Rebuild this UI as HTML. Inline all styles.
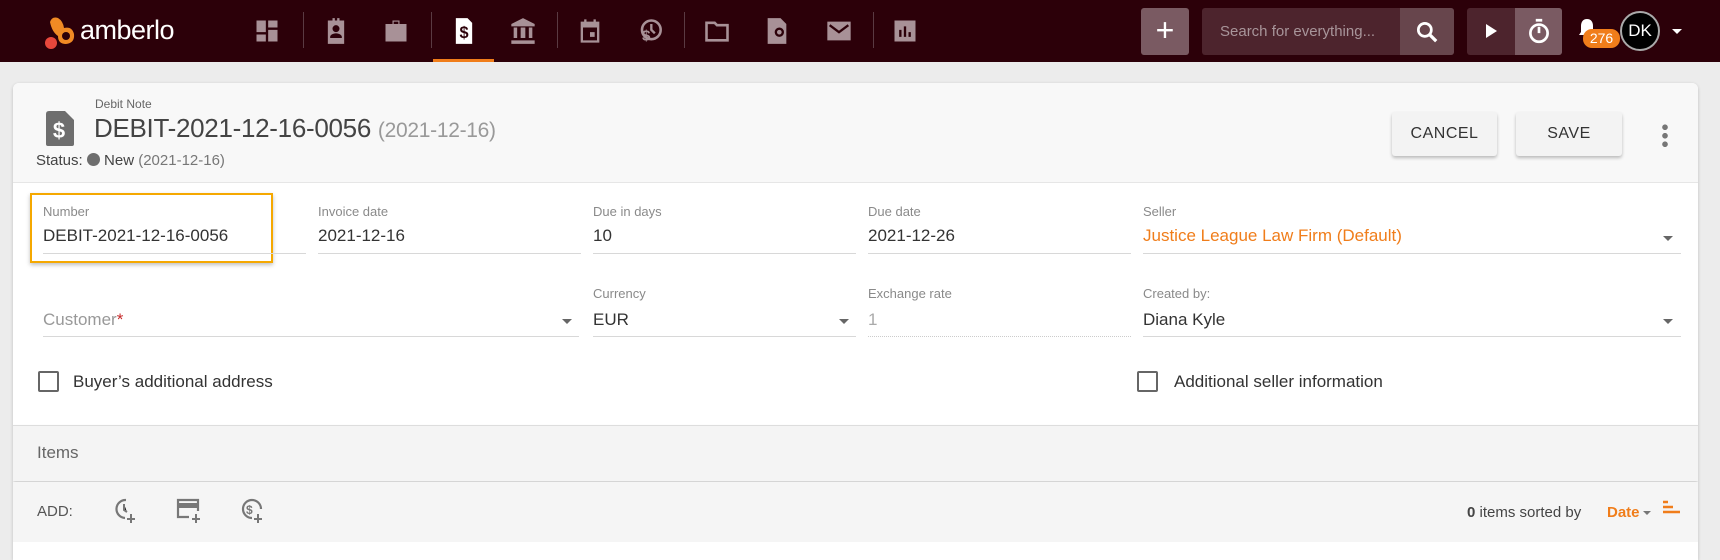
<!DOCTYPE html>
<html><head><meta charset="utf-8"><style>
*{box-sizing:border-box;margin:0;padding:0}
body{width:1720px;height:560px;overflow:hidden;background:#ececec;font-family:"Liberation Sans",sans-serif;color:#333;position:relative}
.nav{position:absolute;left:0;top:0;width:1720px;height:62px;background:#2c0009}
.ab{position:absolute}
.sep{position:absolute;top:12px;width:1px;height:36px;background:#5a3a42}
.ic{position:absolute;top:17px;width:28px;height:28px;margin-left:-2px}
.card{position:absolute;left:13px;top:83px;width:1685px;height:477px;background:#fff;border-radius:6px 6px 0 0;box-shadow:0 1px 3px rgba(0,0,0,.2);overflow:hidden}
.hdr{position:absolute;left:0;top:0;width:100%;height:100px;background:#f8f8f8;border-bottom:1px solid #e6e6e6}
.lbl{position:absolute;font-size:13px;color:#8a8a8a}
.val{position:absolute;font-size:17px;color:#333}
.ul{position:absolute;height:1px;background:#d8d8d8}
.car{position:absolute;width:0;height:0;border-left:5px solid transparent;border-right:5px solid transparent;border-top:5px solid #666}
.btn{position:absolute;top:29px;height:44px;background:#f3f3f3;border-radius:3px;box-shadow:0 2px 3px rgba(0,0,0,.25);font-size:16px;color:#333;text-align:center;line-height:44px;letter-spacing:.5px}
.cb{position:absolute;width:21px;height:21px;border:2px solid #666;border-radius:2px}
</style></head><body>
<div class="nav">
  <svg class="ab" style="left:44px;top:16px" width="44" height="34" viewBox="0 0 44 34"><circle cx="7" cy="27" r="6" fill="#e8473c"/><path d="M6 6 Q8 0 14 2 Q19 5 20 12 Q28 10 30 18 Q31 27 22 28 Q14 28 14 20 Q8 16 6 6Z" fill="#f08a24"/><circle cx="22" cy="20" r="4" fill="#2c0009"/></svg>
  <div class="ab" style="left:80px;top:15px;font-size:27px;color:#fff;letter-spacing:-.5px">amberlo</div>
  <svg class="ic" style="left:255px" viewBox="0 0 24 24"><path d="M3 3h8v10H3zM13 3h8v6h-8zM13 11h8v10h-8zM3 15h8v6H3z" fill="#a89197"/></svg>
  <div class="sep" style="left:303px"></div>
  <svg class="ic" style="left:324px" viewBox="0 0 24 24"><path d="M5 3h4V1h2v2h2V1h2v2h4v20H5zM12 7a3 3 0 100 6 3 3 0 000-6zM7 18h10v-1c0-2-3-3-5-3s-5 1-5 3z" fill="#a89197" fill-rule="evenodd"/></svg>
  <svg class="ic" style="left:384px" viewBox="0 0 24 24"><path d="M9 3h6v3h6v15H3V6h6zM10 4v2h4V4z" fill="#a89197" fill-rule="evenodd"/></svg>
  <div class="sep" style="left:431px"></div>
  <svg class="ic" style="left:452px" viewBox="0 0 24 24"><path d="M5 1h10l4 4v18H5z" fill="#fff"/><text x="12" y="18" font-size="14" font-weight="bold" text-anchor="middle" fill="#2c0009" font-family="Liberation Sans">$</text></svg>
  <div class="ab" style="left:433px;top:59px;width:61px;height:3px;background:#f07d1a"></div>
  <svg class="ic" style="left:511px" viewBox="0 0 24 24"><path d="M12 1l10 5v2H2V6zM4 9h3v9H4zM10 9h4v9h-4zM17 9h3v9h-3zM2 20h20v3H2z" fill="#a89197"/></svg>
  <div class="sep" style="left:557px"></div>
  <svg class="ic" style="left:578px" viewBox="0 0 24 24"><path d="M4 4h3V2h2v2h6V2h2v2h3v18H4zM6 9v11h12V9zM12 13h4v4h-4z" fill="#a89197" fill-rule="evenodd"/></svg>
  <svg class="ic" style="left:637px" viewBox="0 0 24 24"><circle cx="14" cy="11" r="8" fill="none" stroke="#a89197" stroke-width="2.2"/><path d="M14 6v5l3 3" stroke="#a89197" stroke-width="2" fill="none"/><text x="6" y="20" font-size="13" font-weight="bold" fill="#a89197" font-family="Liberation Sans">$</text></svg>
  <div class="sep" style="left:684px"></div>
  <svg class="ic" style="left:705px" viewBox="0 0 24 24"><path d="M3 5h7l2 2h9v13H3z" fill="none" stroke="#a89197" stroke-width="2.2"/></svg>
  <svg class="ic" style="left:765px" viewBox="0 0 24 24"><path d="M4 1h11l5 5v17H4z" fill="#a89197"/><circle cx="14" cy="13" r="4" fill="#2c0009"/><circle cx="14" cy="13" r="2" fill="#a89197"/></svg>
  <svg class="ic" style="left:827px" viewBox="0 0 24 24"><path d="M2 4h20v16H2z" fill="#a89197"/><path d="M4 7l8 6 8-6" stroke="#2c0009" stroke-width="2" fill="none"/></svg>
  <div class="sep" style="left:873px"></div>
  <svg class="ic" style="left:893px" viewBox="0 0 24 24"><path d="M3 3h18v18H3z" fill="#a89197"/><path d="M8 11v6M12 8v9M16 13v4" stroke="#2c0009" stroke-width="2"/></svg>
  <div class="ab" style="left:1141px;top:8px;width:48px;height:47px;background:#7a5a62;border-radius:3px;color:#fff;font-size:32px;text-align:center;line-height:45px">+</div>
  <div class="ab" style="left:1202px;top:8px;width:252px;height:47px;background:#4d242d;border-radius:3px"></div>
  <div class="ab" style="left:1400px;top:8px;width:54px;height:47px;background:#67454c;border-radius:0 3px 3px 0"></div>
  <div class="ab" style="left:1220px;top:23px;font-size:15px;color:#a8959a">Search for everything...</div>
  <svg class="ab" style="left:1414px;top:19px" width="26" height="26" viewBox="0 0 24 24"><circle cx="10" cy="10" r="6" fill="none" stroke="#fff" stroke-width="2.5"/><path d="M14.5 14.5l6 6" stroke="#fff" stroke-width="3"/></svg>
  <div class="ab" style="left:1467px;top:8px;width:95px;height:47px;background:#4d242d;border-radius:3px"></div>
  <div class="ab" style="left:1515px;top:8px;width:47px;height:47px;background:#7a5a62;border-radius:0 3px 3px 0"></div>
  <svg class="ab" style="left:1483px;top:22px" width="16" height="18"><path d="M3 2l11 7-11 7z" fill="#fff"/></svg>
  <svg class="ab" style="left:1526px;top:17px" width="26" height="28" viewBox="0 0 24 26"><circle cx="12" cy="15" r="8" fill="none" stroke="#fff" stroke-width="2.5"/><path d="M9 3h6M12 9v6" stroke="#fff" stroke-width="2.5"/></svg>
  <svg class="ab" style="left:1576px;top:17px" width="22" height="24" viewBox="0 0 22 24"><path d="M11 2c4 0 6 3 6 7v6l2 3H3l2-3V9c0-4 2-7 6-7z" fill="#fff"/></svg>
  <div class="ab" style="left:1583px;top:29px;width:37px;height:19px;background:#f07d1a;border-radius:9px;color:#fff;font-size:14px;text-align:center;line-height:19px">276</div>
  <div class="ab" style="left:1620px;top:11px;width:40px;height:40px;border-radius:50%;background:#000;border:2px solid #aaa;color:#fff;font-size:17px;text-align:center;line-height:36px">DK</div>
  <div class="ab" style="left:1672px;top:29px;width:0;height:0;border-left:5px solid transparent;border-right:5px solid transparent;border-top:5px solid #fff"></div>
</div>

<div class="card">
  <div class="hdr"></div>
  <svg class="ab" style="left:31px;top:27px" width="31" height="37" viewBox="0 0 31 37"><path d="M2 4 Q2 1 5 1h16l9 9v24q0 2-2 2H4q-2 0-2-2z" fill="#6e6e6e"/><text x="15" y="28" font-size="22" font-weight="bold" text-anchor="middle" fill="#fff" font-family="Liberation Sans">$</text></svg>
  <div class="ab" style="left:82px;top:14px;font-size:12px;color:#666">Debit Note</div>
  <div class="ab" style="left:81px;top:30px;font-size:26px;color:#444;letter-spacing:-.3px">DEBIT-2021-12-16-0056 <span style="font-size:21px;color:#999">(2021-12-16)</span></div>
  <div class="ab" style="left:23px;top:69px;font-size:15px;color:#444">Status: <span style="display:inline-block;width:13px;height:13px;border-radius:50%;background:#6e6e6e;vertical-align:-1px"></span> New <span style="color:#777">(2021-12-16)</span></div>
  <div class="btn" style="left:1379px;width:105px">CANCEL</div>
  <div class="btn" style="left:1503px;width:106px">SAVE</div>
  <div class="ab" style="left:1649px;top:40px;width:6px;height:25px;background:radial-gradient(circle,#777 2.6px,transparent 3px) 0 0/6px 8.5px"></div>

  <div class="ab" style="left:17px;top:110px;width:243px;height:70px;border:2px solid #f5a800;box-shadow:0 2px 4px rgba(0,0,0,.25)"></div>
  <div class="lbl" style="left:30px;top:121px">Number</div>
  <div class="val" style="left:30px;top:143px">DEBIT-2021-12-16-0056</div>
  <div class="ul" style="left:30px;top:170px;width:263px"></div>
  <div class="lbl" style="left:305px;top:121px">Invoice date</div>
  <div class="val" style="left:305px;top:143px">2021-12-16</div>
  <div class="ul" style="left:305px;top:170px;width:263px"></div>
  <div class="lbl" style="left:580px;top:121px">Due in days</div>
  <div class="val" style="left:580px;top:143px">10</div>
  <div class="ul" style="left:580px;top:170px;width:263px"></div>
  <div class="lbl" style="left:855px;top:121px">Due date</div>
  <div class="val" style="left:855px;top:143px">2021-12-26</div>
  <div class="ul" style="left:855px;top:170px;width:263px"></div>
  <div class="lbl" style="left:1130px;top:121px">Seller</div>
  <div class="val" style="left:1130px;top:143px;color:#f07d1a">Justice League Law Firm (Default)</div>
  <div class="car" style="left:1650px;top:153px"></div>
  <div class="ul" style="left:1130px;top:170px;width:538px"></div>
  <div class="val" style="left:30px;top:227px;color:#999">Customer<span style="color:#c62828">*</span></div>
  <div class="car" style="left:549px;top:236px"></div>
  <div class="ul" style="left:30px;top:253px;width:536px"></div>
  <div class="lbl" style="left:580px;top:203px">Currency</div>
  <div class="val" style="left:580px;top:227px">EUR</div>
  <div class="car" style="left:826px;top:236px"></div>
  <div class="ul" style="left:580px;top:253px;width:263px"></div>
  <div class="lbl" style="left:855px;top:203px">Exchange rate</div>
  <div class="val" style="left:855px;top:227px;color:#aaa">1</div>
  <div class="ab" style="left:855px;top:253px;width:263px;border-top:1px dotted #ccc"></div>
  <div class="lbl" style="left:1130px;top:203px">Created by:</div>
  <div class="val" style="left:1130px;top:227px">Diana Kyle</div>
  <div class="car" style="left:1650px;top:236px"></div>
  <div class="ul" style="left:1130px;top:253px;width:538px"></div>
  <div class="cb" style="left:25px;top:288px"></div>
  <div class="val" style="left:60px;top:289px">Buyer’s additional address</div>
  <div class="cb" style="left:1124px;top:288px"></div>
  <div class="val" style="left:1161px;top:289px">Additional seller information</div>
  <div class="ab" style="left:0;top:342px;width:100%;height:56px;background:#f4f4f4;border-top:1px solid #ddd;box-shadow:0 2px 3px rgba(0,0,0,.2)"></div>
  <div class="ab" style="left:24px;top:360px;font-size:17px;color:#666">Items</div>
  <div class="ab" style="left:0;top:399px;width:100%;height:60px;background:#f5f5f5"></div>
  <div class="ab" style="left:24px;top:420px;font-size:15px;color:#555">ADD:</div>
  <svg class="ab" style="left:99px;top:414px" width="26" height="28" viewBox="0 0 26 28"><path d="M14 3a9 9 0 10-1 18" fill="none" stroke="#777" stroke-width="2.2"/><path d="M12 7v6l3 2M19 17v9M15 22h8" stroke="#777" stroke-width="2"/></svg>
  <svg class="ab" style="left:162px;top:414px" width="28" height="28" viewBox="0 0 28 28"><path d="M14 20H3V3h20v11" fill="none" stroke="#777" stroke-width="2.2"/><path d="M3 7h20v3H3zM21 17v9M17 22h8" stroke="#777" stroke-width="2" fill="#777"/></svg>
  <svg class="ab" style="left:225px;top:414px" width="28" height="28" viewBox="0 0 28 28"><path d="M14 21a9 9 0 110-18 9 9 0 019 9" fill="none" stroke="#777" stroke-width="2.2"/><text x="8" y="17" font-size="12" font-weight="bold" fill="#777" font-family="Liberation Sans">$</text><path d="M20 17v9M16 22h8" stroke="#777" stroke-width="2"/></svg>
  <div class="ab" style="left:1454px;top:421px;font-size:15px;color:#444"><b>0</b> items sorted by</div>
  <div class="ab" style="left:1594px;top:421px;font-size:15px;color:#f07d1a;font-weight:bold">Date</div>
  <div class="ab" style="left:1630px;top:428px;width:0;height:0;border-left:4px solid transparent;border-right:4px solid transparent;border-top:4px solid #777"></div>
  <svg class="ab" style="left:1649px;top:416px" width="20" height="18"><path d="M1 3h5M1 8h10M1 13h17" stroke="#f07d1a" stroke-width="2.4"/></svg>
</div>
</body></html>
